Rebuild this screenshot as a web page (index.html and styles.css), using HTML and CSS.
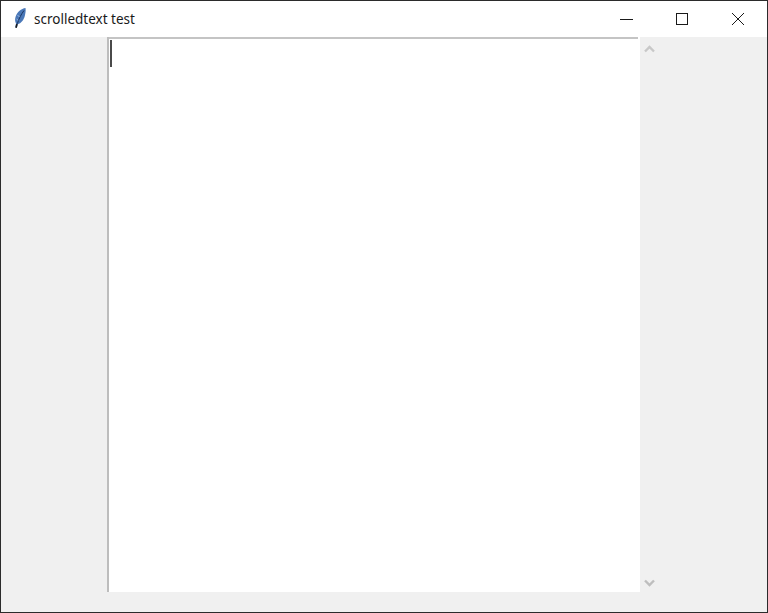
FILE: index.html
```html
<!DOCTYPE html>
<html lang="en">
<head>
<meta charset="utf-8">
<title>scrolledtext test</title>
<link rel="stylesheet" href="styles.css">
</head>
<body>
<div class="window">
  <header class="titlebar">
    <svg class="feather" width="16" height="22" viewBox="0 0 16 22">
      <path d="M13.500 1C9.500 1.500 5 5 3.500 10C2.800 12.500 3 14.800 4 16.500L3.200 20.500L4.800 20.800L5.800 17.200C9 16.500 11.800 13 12.800 9C13.400 6.500 14 3.500 13.500 1Z" fill="#4a78b8"/>
      <path d="M12 3.500C9 7.500 7 11.500 5.300 16.800" fill="none" stroke="#1c3560" stroke-width="1"/>
      <path d="M5.500 8L7.500 10M4.500 12L6.300 13.300" fill="none" stroke="#a9c3e6" stroke-width="0.800"/>
      <path d="M5 17L4 20.700" stroke="#1d1d1d" stroke-width="1.600"/>
    </svg>
    <span class="title">scrolledtext test</span>
    <div class="controls">
      <div class="ctrl"><svg width="14" height="14" viewBox="0 0 14 14"><path d="M1 7.500H14" stroke="#1a1a1a" fill="none"/></svg></div>
      <div class="ctrl"><svg width="14" height="14" viewBox="0 0 14 14"><rect x="1.500" y="1.500" width="11" height="11" stroke="#1a1a1a" fill="none"/></svg></div>
      <div class="ctrl"><svg width="14" height="14" viewBox="0 0 14 14"><path d="M1 1L13 13M13 1L1 13" stroke="#1a1a1a" fill="none"/></svg></div>
    </div>
  </header>
  <main class="client">
    <div class="textbox">
      <div class="topline"></div>
      <div class="caret"></div>
    </div>
    <div class="scrollbar">
      <svg width="11" height="8" viewBox="0 0 11 8"><path d="M1 6.500L5.500 2L10 6.500" stroke="#c8c8c8" stroke-width="2.400" fill="none"/></svg>
      <svg width="11" height="8" viewBox="0 0 11 8"><path d="M1 1.500L5.500 6L10 1.500" stroke="#bebebe" stroke-width="2.400" fill="none"/></svg>
    </div>
  </main>
</div>
</body>
</html>
```
FILE: styles.css
```css
html, body {
  margin: 0;
  padding: 0;
  height: 100%;
  overflow: hidden;
}
.window {
  box-sizing: border-box;
  width: 768px;
  height: 613px;
  border: 1px solid #2b2b2b;
  background: #f0f0f0;
  display: flex;
  flex-direction: column;
}
.titlebar {
  height: 36px;
  flex: none;
  background: #fff;
  display: flex;
  align-items: center;
  padding: 0 1px 0 11px;
}
.feather {
  flex: none;
  margin-right: 6px;
  margin-top: -2px;
}
.title {
  font-family: "Noto Sans", sans-serif;
  font-size: 13.5px;
  color: #1a1a1a;
  margin-top: -1px;
}
.controls {
  margin-left: auto;
  display: flex;
  height: 100%;
}
.ctrl {
  width: 56px;
  display: flex;
  align-items: center;
  justify-content: center;
  margin-top: -1px;
}
.client {
  flex: 1;
  display: flex;
  padding-left: 106px;
  padding-bottom: 20px;
}
.textbox {
  box-sizing: border-box;
  width: 533px;
  background: #fff;
  border-left: 2px solid #bdbdbd;
}
.topline {
  height: 2px;
  margin-right: 2px;
  background: #c4c4c4;
}
.caret {
  width: 2px;
  height: 27px;
  margin: 1px 0 0 1px;
  background: #4a4a4a;
}
.scrollbar {
  width: 18px;
  display: flex;
  flex-direction: column;
  justify-content: space-between;
  align-items: center;
  padding: 8px 0 5px;
}
```
